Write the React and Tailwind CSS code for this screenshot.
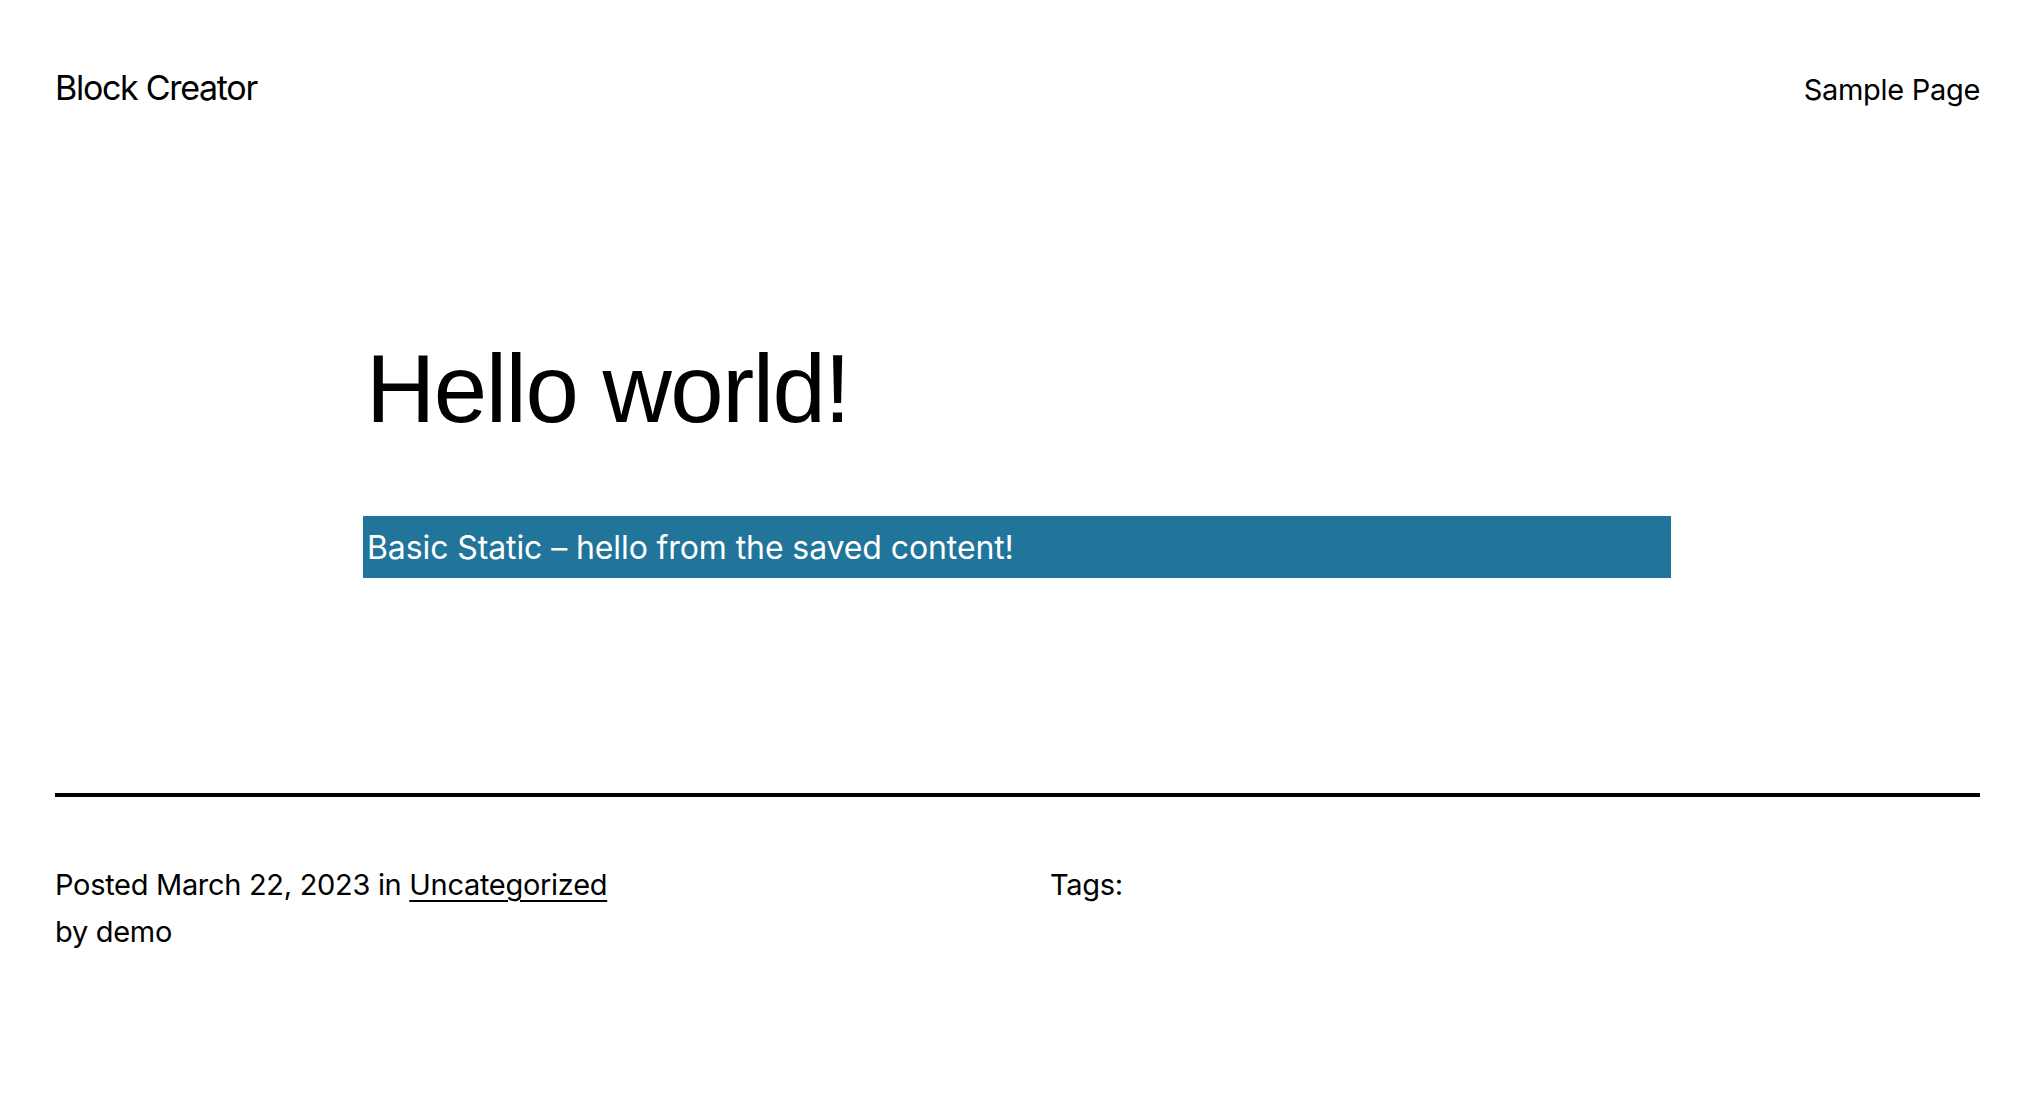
import React from "react";

const sans = { fontFamily: "Inter, 'Noto Sans', sans-serif" };

const Header = () => {
  return (
    <header className="flex items-baseline justify-between pl-[55px] pr-[48px] pt-[71px]">
      <a className="text-[34px] leading-[34px] text-black tracking-[-1.3px]" style={sans}>
        Block Creator
      </a>
      <nav>
        <a className="text-[29px] leading-[34px] text-black tracking-[-0.3px]" style={sans}>
          Sample Page
        </a>
      </nav>
    </header>
  );
};

const PostMeta = () => {
  return (
    <div className="flex pl-[55px] pr-[48px] pt-[64px] text-[29px] leading-[47px] text-black tracking-[-0.3px]" style={sans}>
      <div className="w-[995px]">
        <p>
          Posted March 22, 2023 in{" "}
          <a className="underline decoration-[2px] underline-offset-[5px]">Uncategorized</a>
        </p>
        <p>by demo</p>
      </div>
      <div>
        <p>Tags:</p>
      </div>
    </div>
  );
};

export default function App() {
  return (
    <div className="min-h-[1116px] w-full bg-white text-black">
      <Header />
      <main className="ml-[363px] w-[1308px] pt-[234px]">
        <h1
          className="pl-[3px] text-[96px] leading-[96px] font-normal tracking-[-1.5px]"
          style={{ fontFamily: "'Liberation Sans', Arial, sans-serif" }}
        >
          Hello world!
        </h1>
        <p
          className="mt-[79px] h-[62px] bg-[#21759b] pl-[4px] text-[32px] leading-[64px] text-white tracking-[-0.1px]"
          style={sans}
        >
          Basic Static – hello from the saved content!
        </p>
      </main>
      <div className="mt-[215px] ml-[55px] mr-[48px] h-[4px] bg-black" />
      <PostMeta />
    </div>
  );
}
